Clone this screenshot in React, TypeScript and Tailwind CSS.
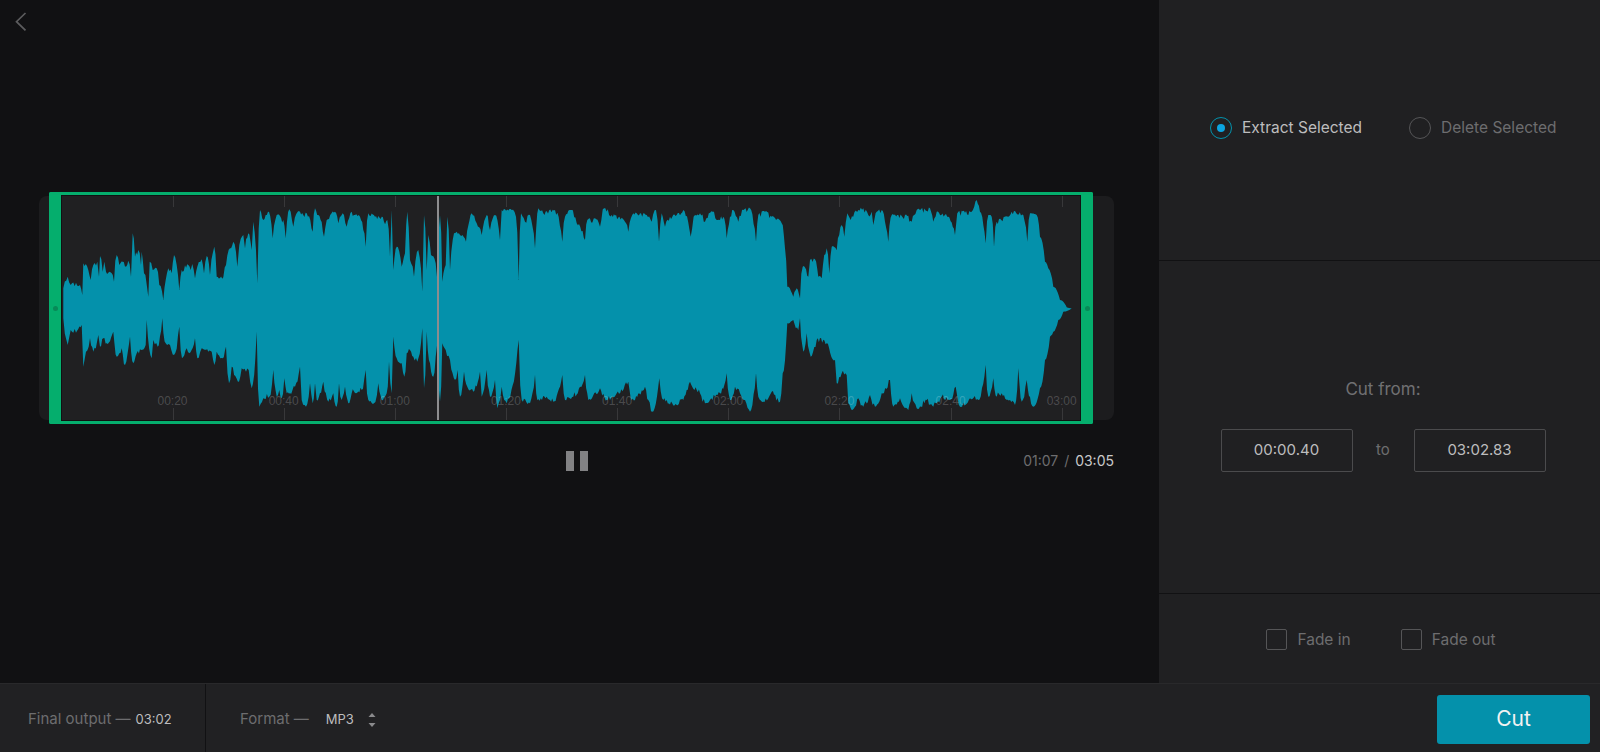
import React from "react";

type Pt = [number, number];

// waveform outline traced per section, in 3x crop units of each section
const TOP_A: Pt[] = [[190,355],[203,320],[212,345],[228,338],[240,345],[247,375],[250,280],[265,300],[272,330],[280,285],[292,275],[297,320],[300,258],[308,305],[313,275],[318,305],[335,310],[342,335],[350,255],[358,285],[368,275],[378,290],[385,272],[393,320],[398,190],[405,260],[415,240],[423,285],[425,245],[432,310],[445,380],[449,275],[458,300],[470,295],[478,345],[490,390],[497,330],[505,295],[515,310],[522,255],[530,285],[538,360],[545,300],[565,285],[572,300],[577,282],[585,325],[592,290],[605,268],[612,310],[620,258],[630,315],[643,230],[650,320],[670,322],[678,285],[690,235],[700,215],[712,290],[718,225],[730,195],[735,235],[745,190],[755,240],[760,155],[768,240],[772,340],[780,120],[790,150],[797,135],[807,125],[818,205],[830,135],[850,150],[857,205],[868,118],[880,170],[893,125]];
const BOT_A: Pt[] = [[190,445],[203,525],[212,480],[228,488],[245,465],[250,590],[258,545],[270,505],[280,545],[295,495],[300,530],[310,505],[320,520],[340,485],[350,560],[358,550],[365,535],[375,585],[390,500],[400,580],[410,550],[437,525],[440,450],[455,565],[460,510],[473,530],[487,445],[497,520],[510,525],[522,555],[538,470],[546,565],[560,535],[568,550],[585,505],[592,565],[605,535],[625,545],[635,545],[643,585],[650,545],[668,565],[678,530],[687,640],[695,590],[717,635],[725,595],[738,605],[746,600],[755,655],[770,485],[778,710],[790,685],[808,680],[820,600],[830,680],[838,660],[845,685],[853,625],[860,670],[870,670],[885,650]];
const TOP_B: Pt[] = [[0,95],[10,105],[20,100],[38,155],[45,85],[55,105],[72,170],[80,120],[105,95],[115,130],[128,100],[140,140],[155,95],[165,105],[180,110],[190,150],[197,200],[205,100],[225,110],[245,110],[252,125],[262,120],[270,230],[275,90],[280,270],[290,200],[305,260],[315,220],[322,95],[330,240],[342,290],[355,210],[367,335],[372,105],[380,270],[385,165],[393,225],[407,250],[412,300],[420,105],[427,305],[437,255],[442,110],[450,270],[462,160],[470,155],[480,165],[498,185],[515,100],[530,130],[545,165],[560,105],[570,150],[585,105],[600,180],[605,90],[635,90],[648,110],[656,300],[663,100],[675,125],[690,105],[705,205],[715,85],[730,100],[765,90],[787,185],[795,110],[815,90],[830,130],[855,180],[862,120],[885,115],[900,140],[912,85],[935,105],[975,125],[985,155],[1000,100],[1040,105],[1055,125],[1068,90],[1077,185],[1085,100],[1095,140],[1110,110],[1130,105],[1150,90],[1172,170],[1185,105]];
const BOT_B: Pt[] = [[0,560],[5,660],[18,680],[30,610],[38,670],[45,610],[50,660],[70,605],[85,665],[100,640],[110,680],[117,610],[125,660],[135,620],[145,670],[155,640],[185,630],[197,570],[205,660],[222,670],[235,610],[245,660],[260,640],[267,545],[275,640],[280,470],[290,535],[305,550],[313,590],[320,520],[330,510],[340,530],[352,545],[367,445],[372,625],[380,455],[390,550],[400,590],[407,530],[412,490],[420,665],[427,490],[437,510],[450,540],[465,600],[473,570],[480,650],[492,575],[502,620],[520,635],[540,575],[545,650],[560,570],[570,650],[585,600],[592,685],[605,620],[620,670],[656,480],[665,660],[690,670],[705,585],[712,660],[740,650],[760,665],[787,585],[795,660],[820,650],[840,620],[855,585],[865,660],[900,625],[920,660],[950,640],[985,605],[995,660],[1035,620],[1045,660],[1057,695],[1078,595],[1090,660],[1130,675],[1170,605]];
const TOP_C: Pt[] = [[0,100],[15,125],[38,95],[50,120],[70,110],[80,175],[100,90],[115,125],[130,90],[150,85],[168,185],[175,105],[195,95],[215,110],[245,130],[255,205],[262,320],[280,350],[290,325],[300,355],[308,260],[325,290],[330,240],[345,238],[355,290],[365,295],[380,205],[388,280],[395,200],[410,210],[425,135],[433,170],[442,100],[452,120],[475,90],[490,85],[505,105],[515,95],[520,135],[530,95],[545,90],[555,125],[565,185],[575,105],[615,105],[635,125],[650,90],[690,85],[700,125],[710,95],[745,110],[765,165],[775,95],[815,95],[830,60],[840,95],[857,190],[865,105],[875,110],[882,200],[890,125],[925,110],[935,95],[970,105],[982,185],[990,100],[1010,105],[1020,170],[1035,245],[1045,265],[1060,320],[1080,360],[1100,382],[1115,385]];
const BOT_C: Pt[] = [[0,640],[15,670],[30,660],[45,650],[60,640],[80,580],[90,660],[105,620],[120,640],[135,660],[150,695],[168,580],[175,650],[190,665],[215,635],[240,665],[248,580],[262,430],[280,420],[295,450],[300,415],[310,515],[320,460],[332,530],[350,480],[380,490],[405,540],[410,610],[425,580],[440,585],[445,670],[455,690],[475,655],[490,680],[510,645],[525,680],[545,640],[570,600],[580,680],[600,655],[625,690],[635,640],[650,685],[680,660],[700,680],[725,650],[750,660],[767,620],[780,680],[810,655],[835,660],[857,555],[865,650],[880,595],[890,650],[905,640],[930,660],[945,675],[955,565],[965,665],[980,600],[1000,680],[1020,625],[1035,540],[1050,470],[1060,455],[1075,420],[1090,395],[1115,385]];

const MID = 307;

const place = (pts: Pt[], ox: number, oy: number): Pt[] =>
  pts.map(([x, y]) => [ox + x / 3, oy + y / 3]);

// thin out the dips and add the fine teeth of the wave
const roughen = (pts: Pt[]): Pt[] => {
  const out: Pt[] = [];
  pts.forEach((p, i) => {
    const next = pts[i + 1];
    out.push(p);
    if (!next) return;
    const gap = next[0] - p[0];
    const steps = Math.floor(gap / 1.1);
    const firstIsOuter = Math.abs(p[1] - MID) > Math.abs(next[1] - MID);
    const [outer, inner] = firstIsOuter ? [p[1], next[1]] : [next[1], p[1]];
    for (let s = 1; s < steps; s++) {
      const t = s / steps;
      const d = firstIsOuter ? 1 - t : t;
      const y = outer + (inner - outer) * Math.pow(1 - d, 2);
      const x = p[0] + gap * t;
      const fade = x > 1030 ? 0.15 : 1;
      const amp = Math.min(3.2, Math.abs(y - MID) / 9) * fade;
      const noise = Math.sin(x * 12.9898) * 43758.5453;
      const r = noise - Math.floor(noise);
      // teeth point towards the middle more often than away from it
      const dir = y < MID ? 1 : -1;
      out.push([x, y + dir * (r * r * 1.6 - 0.3) * amp]);
    }
  });
  return out;
};

const top = roughen([...place(TOP_A, 0, 170), ...place(TOP_B, 300, 180), ...place(TOP_C, 700, 180)]);
const bottom = roughen([...place(BOT_A, 0, 170), ...place(BOT_B, 300, 180), ...place(BOT_C, 700, 180)]);

const wavePath =
  "M" +
  [...top, ...bottom.reverse()]
    .map(([x, y]) => `${x.toFixed(1)} ${y.toFixed(1)}`)
    .join("L") +
  "Z";

const TICKS = ["00:20", "00:40", "01:00", "01:20", "01:40", "02:00", "02:20", "02:40", "03:00"];

const Waveform = () => (
  <div className="relative h-[224px] ml-[39px] mr-[45px] rounded-lg bg-[#1c1c1e]">
    <div className="absolute left-[21px] right-[32px] inset-y-0 bg-[#202022]" />
    <svg className="absolute inset-0" width="1075" height="224" viewBox="39 196 1075 224">
      <path d={wavePath} fill="#0491ab" />
    </svg>
    {TICKS.map((t, i) => (
      <div key={t} className="absolute inset-y-0 w-0" style={{ left: 133.5 + i * 111.15 }}>
        <div className="absolute top-0 h-[11px] w-px bg-[#38383a]" />
        <div className="absolute bottom-0 h-[12px] w-px bg-[#38383a]" />
        <span className="absolute top-[198px] -translate-x-1/2 font-['Liberation_Sans',sans-serif] text-xs leading-[15px] text-white/20">
          {t}
        </span>
      </div>
    ))}
    <div className="absolute inset-y-0 left-[398px] w-[1.5px] bg-[#8d8d8f]" />
    <div className="absolute left-[10px] right-[21px] -top-[4px] -bottom-[4px] flex rounded-[2px] border-y-[3px] border-[#05ae6d]">
      <div className="-my-[3px] flex w-[12px] items-center justify-center rounded-l-[2px] bg-[#05ae6d]">
        <div className="size-[5px] rounded-full bg-[#078a57]" />
      </div>
      <div className="flex-1 border border-[#111113]" />
      <div className="-my-[3px] flex w-[12px] items-center justify-center rounded-r-[2px] bg-[#05ae6d]">
        <div className="size-[5px] rounded-full bg-[#078a57]" />
      </div>
    </div>
  </div>
);

export default function App() {
  return (
    <div className="flex h-screen w-full flex-col overflow-hidden bg-[#111113] font-[Inter,sans-serif]">
      <div className="flex h-[683px]">
        {/* Editor */}
        <div className="flex-1">
          <div className="h-[196px] pl-[14px] pt-[12px]">
            <svg width="13" height="19" viewBox="0 0 13 19" fill="none" stroke="#5c5c5e" strokeWidth="1.7">
              <path d="M11.5 1 2.5 9.7l9 8.7" />
            </svg>
          </div>
          <Waveform />
          <div className="relative mt-[31px] ml-[39px] mr-[45px] flex h-[20px] items-center justify-center">
            <div className="ml-[1px] flex gap-[6px]">
              <div className="h-[20px] w-[8px] bg-[#828284]" />
              <div className="h-[20px] w-[8px] bg-[#828284]" />
            </div>
            <div className="absolute right-0 top-0 text-sm text-[#6d6d6f]">
              01:07 <span className="mx-[2px]">/</span> <span className="text-[#c9c9ca]">03:05</span>
            </div>
          </div>
        </div>

        {/* Options */}
        <div className="flex w-[441px] flex-col bg-[#202022]">
          <div className="flex h-[261px] items-start gap-[47px] border-b border-[#111113] pl-[51px] pt-[117px]">
            <div className="flex items-center gap-[10px]">
              <div className="flex size-[22px] items-center justify-center rounded-full border border-[#0491ab]">
                <div className="size-[8px] rounded-full bg-[#0ba4e0]" />
              </div>
              <span className="text-[15.5px] leading-[22px] text-[#bdbdbe]">Extract Selected</span>
            </div>
            <div className="flex items-center gap-[10px]">
              <div className="size-[22px] rounded-full border border-[#555557]" />
              <span className="text-[15.5px] leading-[22px] text-[#6d6d6f]">Delete Selected</span>
            </div>
          </div>
          <div className="flex h-[333px] flex-col items-center border-b border-[#111113] pl-[7px] pt-[118px]">
            <div className="text-[17px] leading-[20px] text-[#707072]">Cut from:</div>
            <div className="mt-[30px] flex items-center">
              <div className="flex h-[43px] w-[132px] items-center justify-center rounded-[2px] border border-[#4b4b4d] text-[15px] text-[#bdbdbe]">
                00:00.40
              </div>
              <div className="w-[61px] text-center text-[15px] text-[#6d6d6f]">to</div>
              <div className="flex h-[43px] w-[132px] items-center justify-center rounded-[2px] border border-[#4b4b4d] text-[15px] text-[#bdbdbe]">
                03:02.83
              </div>
            </div>
          </div>
          <div className="flex flex-1 items-center justify-center gap-[50px] pl-[3px] pt-[2px]">
            <div className="flex items-center gap-[10px]">
              <div className="size-[21px] rounded-[2px] border border-[#555557]" />
              <span className="text-[15.5px] text-[#6d6d6f]">Fade in</span>
            </div>
            <div className="flex items-center gap-[10px]">
              <div className="size-[21px] rounded-[2px] border border-[#555557]" />
              <span className="text-[15.5px] text-[#6d6d6f]">Fade out</span>
            </div>
          </div>
        </div>
      </div>

      {/* Bottom bar */}
      <div className="flex flex-1 items-center border-t border-[#29292b] bg-[#212123]">
        <div className="flex h-full w-[206px] items-center border-r border-[#111113] pl-[28px] pt-[3px]">
          <span className="text-[15px] text-[#6d6d6f]">Final output —</span>
          <span className="ml-[5px] text-[13px] text-[#bdbdbe]">03:02</span>
        </div>
        <div className="flex items-center pl-[34px] pt-[3px]">
          <span className="text-[15px] text-[#6d6d6f]">Format —</span>
          <span className="ml-[17px] text-[13px] text-[#bdbdbe]">MP3</span>
          <svg className="ml-[14px]" width="8" height="14" viewBox="0 0 8 14" fill="#8a8a8c">
            <path d="M4 0 7.5 4H.5zM4 14 .5 10h7z" />
          </svg>
        </div>
        <button className="ml-auto mr-[10px] mt-[2px] h-[49px] w-[153px] rounded-[3px] bg-[#0491ab] text-[21px] text-[#f2f2f2]">
          Cut
        </button>
      </div>
    </div>
  );
}
